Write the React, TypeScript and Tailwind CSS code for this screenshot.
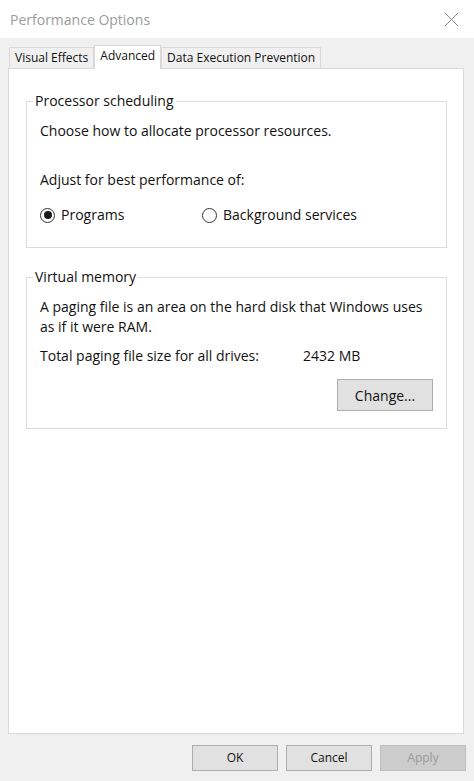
import React from 'react'

const body = "font-['Open_Sans','Noto_Sans',sans-serif]"

const Radio = ({ checked, label }: { checked?: boolean; label: string }) => (
    <label className="flex items-center gap-[6px]">
        <span className="flex h-[15px] w-[15px] items-center justify-center rounded-full border border-[#333333] bg-white">
            {checked && <span className="h-[8px] w-[8px] rounded-full bg-[#1a1a1a]" />}
        </span>
        <span>{label}</span>
    </label>
)

const Group = ({ title, children, className }: { title: string; children: React.ReactNode; className?: string }) => (
    <fieldset className={`ml-[17px] mr-[16px] border border-[#dcdcdc] pl-[13px] pr-[13px] ${className ?? ''}`}>
        <legend className="-ml-[7px] px-[2px] leading-[18px]">{title}</legend>
        {children}
    </fieldset>
)

const Tab = ({ label, active }: { label: string; active?: boolean }) =>
    active ? (
        <div className="relative z-10 -mb-px flex h-[24px] items-start border border-b-0 border-[#d9d9d9] bg-white px-[5px] pt-[2px] text-[12px] leading-[16px]">
            {label}
        </div>
    ) : (
        <div className="flex h-[21px] items-center border border-b-0 border-[#d9d9d9] bg-[#f0f0f0] px-[5px] text-[12px] leading-[16px]">
            {label}
        </div>
    )

const Button = ({ label, disabled }: { label: string; disabled?: boolean }) => (
    <button
        className={`flex h-[26px] w-[86px] items-center justify-center border text-[12px] ${
            disabled ? 'border-[#bfbfbf] bg-[#cccccc] text-[#9a9a9a]' : 'border-[#adadad] bg-[#e1e1e1] text-[#111111]'
        }`}
    >
        {label}
    </button>
)

export default function App() {
    return (
        <div className={`flex h-[781px] w-[474px] flex-col overflow-hidden bg-[#f0f0f0] text-[#111111] ${body}`}>
            <div className="flex h-[38px] shrink-0 items-center justify-between bg-white pl-[10px] pr-[15px]">
                <span className="text-[14px] text-[#9b9b9b]">Performance Options</span>
                <svg width="15" height="15" viewBox="0 0 15 15" className="text-[#8a8a8a]">
                    <path d="M1 1 L14 14 M14 1 L1 14" stroke="currentColor" strokeWidth="1" />
                </svg>
            </div>

            <div className="mt-[7px] flex items-end pl-[9px]">
                <Tab label="Visual Effects" />
                <Tab label="Advanced" active />
                <Tab label="Data Execution Prevention" />
            </div>

            <div className="ml-[8px] h-[666px] w-[456px] border border-[#d9d9d9] bg-white pt-[23px] text-[14px]">
                <Group title="Processor scheduling" className="pb-[22px]">
                    <p className="mt-[11px] leading-[20px]">Choose how to allocate processor resources.</p>
                    <p className="mt-[29px] leading-[20px]">Adjust for best performance of:</p>
                    <div className="mt-[15px] flex leading-[20px]">
                        <div className="w-[162px]">
                            <Radio checked label="Programs" />
                        </div>
                        <Radio label="Background services" />
                    </div>
                </Group>

                <Group title="Virtual memory" className="mt-[20px] pb-[17px]">
                    <p className="mt-[11px] leading-[20px]">
                        A paging file is an area on the hard disk that Windows uses as if it were RAM.
                    </p>
                    <div className="mt-[9px] flex leading-[20px]">
                        <span className="w-[263px]">Total paging file size for all drives:</span>
                        <span>2432 MB</span>
                    </div>
                    <div className="mt-[13px] flex justify-end">
                        <button className="h-[32px] w-[96px] border border-[#adadad] bg-[#e1e1e1]">Change...</button>
                    </div>
                </Group>
            </div>

            <div className="mt-[11px] flex justify-end gap-[8px] pr-[8px]">
                <Button label="OK" />
                <Button label="Cancel" />
                <Button label="Apply" disabled />
            </div>
        </div>
    )
}
